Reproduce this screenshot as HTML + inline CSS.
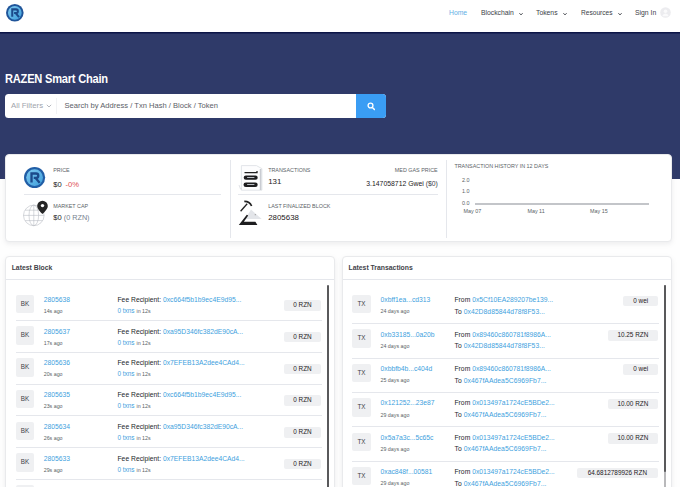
<!DOCTYPE html>
<html><head><meta charset="utf-8">
<style>
*{box-sizing:border-box;margin:0;padding:0}
html,body{width:680px;height:487px;overflow:hidden;background:#fefefe;font-family:"Liberation Sans",sans-serif;color:#1e2022}
a{color:#419fde;text-decoration:none}
#hdr{position:absolute;left:0;top:0;width:680px;height:32px;background:#fff}
#logo{position:absolute;left:6.200px;top:4px}
.nav{position:absolute;top:9.100px;font-size:6.8px;color:#3c4047;white-space:nowrap}
#band{position:absolute;left:0;top:32px;width:680px;height:147px;background:#2f3a69;border-top:1px solid #0c1546;box-shadow:inset 0 1px 0 #1c2658}
#title{position:absolute;left:5px;top:73.100px;transform:scaleY(1.08);transform-origin:0 50%;font-size:11.1px;font-weight:bold;color:#fff;letter-spacing:-0.22px}
#search{position:absolute;left:5px;top:94px;width:381px;height:24px;background:#fff;border-radius:3.500px;overflow:hidden}
#search .f{position:absolute;left:6px;top:7px;font-size:7.8px;color:#a0a4ab}
#search .p{position:absolute;left:59.500px;top:7px;font-size:7.58px;color:#5b6067}
#search .b{position:absolute;right:0;top:0;width:30px;height:24px;background:#3a9df4}
.card{position:absolute;background:#fff;border:1px solid #e9eaec;border-radius:4px;box-shadow:0 2px 5px rgba(120,125,135,.13)}
#stats{left:5px;top:154px;width:667px;height:88px}
#st{position:absolute;left:0;top:0;width:680px;height:0}
.v2{font-size:7.900px!important}
.ax{font-size:5.400px!important}
.lbl{position:absolute;line-height:9px;font-size:5.400px;color:#5a5f66;letter-spacing:0;white-space:nowrap}
.val{position:absolute;line-height:10px;font-size:7.600px;color:#1e2022;white-space:nowrap}
.hr{position:absolute;height:1px;background:#e5e7ec}
.vr{position:absolute;width:1px;background:#e5e7ec}
.hd{position:absolute;line-height:10px;font-size:6.850px;font-weight:bold;color:#3f4349;white-space:nowrap}
#rows{position:absolute;left:0;top:0;width:680px;height:0;font-size:6.750px}
.sq{position:absolute;width:18.500px;height:18.500px;background:#eff0f2;border-radius:2px;font-size:6.300px;color:#3c4047;text-align:center;line-height:18.500px}
.t{position:absolute;line-height:10px;white-space:nowrap}
.m{color:#25282c}
.s{font-size:5.300px;color:#5a5f66}
.in{font-size:5.300px;color:#5a5f66}
.bdg{position:absolute;height:10.700px;background:#eff0f2;border-radius:2px;font-size:6.400px;color:#1e2022;text-align:center;line-height:10.700px;white-space:nowrap}
.sb{position:absolute;width:2px;background:#59595b;border-radius:1px}
</style></head><body>
<div id="hdr">
<svg id="logo" width="17.600" height="17.600" viewBox="0 0 20 20"><defs><linearGradient id="lg0" x1="0" y1="0" x2="1" y2="1"><stop offset="0" stop-color="#7fcaf0"/><stop offset="1" stop-color="#3f9fdc"/></linearGradient></defs><circle cx="10" cy="10" r="10" fill="#1f5499"/><circle cx="10" cy="10" r="7.800" fill="url(#lg0)"/><path d="M7.100 14.600V6.100h4.300a2.100 2.100 0 0 1 0 4.200H9.200M11 10.300l3.800 4.700" fill="none" stroke="#1b4a8b" stroke-width="2.300"/></svg>
<span class="nav" style="left:449px;color:#62afe5">Home</span>
<span class="nav" style="left:481px">Blockchain</span>
<span class="nav" style="left:536px">Tokens</span>
<span class="nav" style="left:581px;font-size:6.6px;top:9.300px">Resources</span>
<span class="nav" style="left:635px">Sign In</span>
<svg style="position:absolute;left:517.700px;top:10.900px" width="6" height="6" viewBox="0 0 6 6"><path d="M1.5 2.3L3 3.8 4.5 2.3" fill="none" stroke="#2c3037" stroke-width="1"/></svg>
<svg style="position:absolute;left:561.700px;top:10.900px" width="6" height="6" viewBox="0 0 6 6"><path d="M1.5 2.3L3 3.8 4.5 2.3" fill="none" stroke="#2c3037" stroke-width="1"/></svg>
<svg style="position:absolute;left:616.700px;top:10.900px" width="6" height="6" viewBox="0 0 6 6"><path d="M1.5 2.3L3 3.8 4.5 2.3" fill="none" stroke="#2c3037" stroke-width="1"/></svg>
<svg style="position:absolute;left:660px;top:7px" width="11" height="11" viewBox="0 0 11 11"><circle cx="5.5" cy="5.5" r="5.300" fill="#ececef"/><circle cx="5.5" cy="4.3" r="1.800" fill="#fafafb"/><path d="M2.200 9.200a3.400 3.400 0 0 1 6.600 0z" fill="#fafafb"/></svg>
</div>
<div id="band"></div>
<div id="title">RAZEN Smart Chain</div>
<div id="search"><span class="f">All Filters</span>
<svg style="position:absolute;left:41px;top:9px" width="6" height="6" viewBox="0 0 6 6"><path d="M.8 1.800L3 4 5.200 1.800" fill="none" stroke="#a3a7ae" stroke-width=".8"/></svg>
<div style="position:absolute;left:51px;top:4px;width:1px;height:16px;background:#f1f2f4"></div>
<span class="p">Search by Address / Txn Hash / Block / Token</span>
<div class="b"><svg style="position:absolute;left:10.500px;top:8px" width="8.800" height="8.800" viewBox="0 0 8 8"><circle cx="3.2" cy="3.2" r="2.2" fill="none" stroke="#fff" stroke-width="1.2"/><path d="M4.9 4.9L7.2 7.2" stroke="#fff" stroke-width="1.3"/></svg></div>
</div>

<div class="card" id="stats"></div>
<div id="st">
<svg style="position:absolute;left:24.400px;top:167.100px" width="21.200" height="21.200" viewBox="0 0 20 20"><defs><linearGradient id="lg" x1="0" y1="0" x2="1" y2="1"><stop offset="0" stop-color="#7fcaf0"/><stop offset="1" stop-color="#3f9fdc"/></linearGradient></defs><circle cx="10" cy="10" r="10" fill="#215ea6"/><circle cx="10" cy="10" r="7.900" fill="url(#lg)"/><path d="M7.100 14.600V6.100h4.300a2.100 2.100 0 0 1 0 4.200H9.200M11 10.300l3.800 4.700" fill="none" stroke="#1b4a8b" stroke-width="2.200"/></svg>
<span class="lbl" style="left:53.200px;top:166px">PRICE</span>
<span class="val" style="left:53.200px;top:179.500px">$0 <span style="color:#de4d52;margin-left:1.700px">-0%</span></span>
<div class="hr" style="left:24px;top:194px;width:197px"></div>
<svg style="position:absolute;left:22.500px;top:199.500px" width="26" height="27" viewBox="0 0 26 27"><g fill="none" stroke="#b4b8be" stroke-width=".55"><circle cx="10.800" cy="15.400" r="10.300"/><ellipse cx="10.800" cy="15.400" rx="4.800" ry="10.300"/><path d="M.5 15.400h20.600M10.800 5.100v20.600M2.200 10.200h17.200M2.200 20.600h17.200"/></g><path d="M19.500 .7a5.300 5.300 0 0 0-5.300 5.300c0 3.600 5.300 8 5.300 8s5.300-4.400 5.300-8a5.300 5.300 0 0 0-5.300-5.300z" fill="#262626"/><circle cx="19.500" cy="5.600" r="1.700" fill="#fff"/></svg>
<span class="lbl" style="left:53.200px;top:202.200px">MARKET CAP</span>
<span class="val" style="left:53.200px;top:213px">$0 <span style="color:#77838f;font-size:7.250px">(0 RZN)</span></span>
<div class="vr" style="left:230px;top:160px;height:78px"></div>
<svg style="position:absolute;left:238px;top:164px" width="26" height="28" viewBox="0 0 26 28"><path d="M3.400 1.600h15l5.500 3v21.600H3.400z" fill="#fdfdfe" stroke="#dfe2e7" stroke-width=".9"/><path d="M22.600 5v21" stroke="#c9ccd2" stroke-width="1.600"/><path d="M6.500 8.600h12.500v-1.500" fill="none" stroke="#222" stroke-width="1.300"/><rect x="5.700" y="11.500" width="14" height="4.300" rx="2.150" fill="#1d1d1f"/><rect x="9" y="13" width="7.500" height="1.100" rx=".5" fill="#b9bdc3"/><rect x="5.500" y="18.400" width="14.200" height="4.700" rx="2.350" fill="#1d1d1f"/><rect x="9" y="20" width="7.500" height="1.100" rx=".5" fill="#b9bdc3"/><path d="M1 21l1.500 4h1.500" fill="none" stroke="#d3d6db" stroke-width=".7"/></svg>
<span class="lbl" style="left:268.200px;top:166px">TRANSACTIONS</span>
<span class="val v2" style="left:268.200px;top:177.200px">131</span>
<span class="lbl" style="right:242.300px;top:166.400px">MED GAS PRICE</span>
<span class="val" style="right:242.200px;top:178.600px;font-size:6.850px">3.147058712 Gwei <span style="color:#3c4047">($0)</span></span>
<div class="hr" style="left:238px;top:194px;width:200px"></div>
<svg style="position:absolute;left:238px;top:199px" width="26" height="28" viewBox="0 0 26 28"><path d="M2.600 12.300L9.200 4.700" stroke="#222" stroke-width="1.300"/><path d="M6.300 2.400c3.200-.1 6 1.700 7.300 4.600" fill="none" stroke="#222" stroke-width="1.700"/><path d="M13 10.500l10.700 9.500H7z" fill="#e3e5e9"/><path d="M8.800 15.800l1.400.6-4.300 6.400h11.500l2 3.300H.8z" fill="#1d1d1f"/><circle cx="17.300" cy="15.700" r=".6" fill="#999"/></svg>
<span class="lbl" style="left:268.200px;top:202px">LAST FINALIZED BLOCK</span>
<span class="val v2" style="left:268.200px;top:213.200px">2805638</span>
<div class="vr" style="left:446px;top:160px;height:78px"></div>
<span class="lbl" style="left:454.400px;top:161.900px">TRANSACTION HISTORY IN 12 DAYS</span>
<span class="lbl ax" style="left:462px;top:176.300px">2.0</span>
<span class="lbl ax" style="left:462px;top:187px">1.0</span>
<span class="lbl ax" style="left:462px;top:199px">0.0</span>
<div class="hr" style="left:475px;top:203px;width:174px;height:2px;background:#c3c5c9"></div>
<span class="lbl ax" style="left:463.500px;top:206.800px">May 07</span>
<span class="lbl ax" style="left:527.400px;top:206.800px">May 11</span>
<span class="lbl ax" style="left:590px;top:206.800px">May 15</span>
</div>

<div class="card" id="lb" style="left:5px;top:256px;width:330px;height:260px"></div>
<div class="card" id="lt" style="left:342px;top:256px;width:330px;height:260px"></div>
<div class="hd" style="left:11.700px;top:263.300px">Latest Block</div>
<div class="hd" style="left:348.500px;top:263.300px">Latest Transactions</div>
<div class="hr" style="left:6px;width:328px;top:279px"></div>
<div class="hr" style="left:343px;width:328px;top:279px"></div>
<div class="sb" style="left:327px;top:285px;height:210px"></div>
<div class="sb" style="left:664.200px;top:285px;height:210px;background:#b9b9bb"></div>
<div class="sb" style="left:664.200px;top:285px;height:187.400px"></div>
<div id="rows">
<div class="sq" style="left:15.700px;top:294.5px">BK</div><a class="t a" style="left:43.700px;top:294.9px">2805638</a><span class="t s" style="left:43.700px;top:305.9px">14s ago</span><span class="t m" style="left:117.500px;top:294.9px">Fee Recipient: <a>0xc664f5b1b9ec4E9d95...</a></span><span class="t m" style="left:117.500px;top:305.8px"><a style="font-size:6.400px">0 txns</a> <span class="in">in 12s</span></span><div class="bdg" style="left:283.700px;width:37.500px;top:300px">0 RZN</div><div class="hr" style="left:15.700px;width:306px;top:320px"></div>
<div class="sq" style="left:15.700px;top:326.2px">BK</div><a class="t a" style="left:43.700px;top:326.6px">2805637</a><span class="t s" style="left:43.700px;top:337.6px">17s ago</span><span class="t m" style="left:117.500px;top:326.6px">Fee Recipient: <a>0xa95D346fc382dE90cA...</a></span><span class="t m" style="left:117.500px;top:337.6px"><a style="font-size:6.400px">0 txns</a> <span class="in">in 12s</span></span><div class="bdg" style="left:283.700px;width:37.500px;top:331.8px">0 RZN</div><div class="hr" style="left:15.700px;width:306px;top:352px"></div>
<div class="sq" style="left:15.700px;top:358px">BK</div><a class="t a" style="left:43.700px;top:358.4px">2805636</a><span class="t s" style="left:43.700px;top:369.4px">20s ago</span><span class="t m" style="left:117.500px;top:358.4px">Fee Recipient: <a>0x7EFEB13A2dee4CAd4...</a></span><span class="t m" style="left:117.500px;top:369.3px"><a style="font-size:6.400px">0 txns</a> <span class="in">in 12s</span></span><div class="bdg" style="left:283.700px;width:37.500px;top:363.5px">0 RZN</div><div class="hr" style="left:15.700px;width:306px;top:384px"></div>
<div class="sq" style="left:15.700px;top:389.8px">BK</div><a class="t a" style="left:43.700px;top:390.1px">2805635</a><span class="t s" style="left:43.700px;top:401.1px">23s ago</span><span class="t m" style="left:117.500px;top:390.1px">Fee Recipient: <a>0xc664f5b1b9ec4E9d95...</a></span><span class="t m" style="left:117.500px;top:401.1px"><a style="font-size:6.400px">0 txns</a> <span class="in">in 12s</span></span><div class="bdg" style="left:283.700px;width:37.500px;top:395.2px">0 RZN</div><div class="hr" style="left:15.700px;width:306px;top:415px"></div>
<div class="sq" style="left:15.700px;top:421.5px">BK</div><a class="t a" style="left:43.700px;top:421.9px">2805634</a><span class="t s" style="left:43.700px;top:432.9px">26s ago</span><span class="t m" style="left:117.500px;top:421.9px">Fee Recipient: <a>0xa95D346fc382dE90cA...</a></span><span class="t m" style="left:117.500px;top:432.8px"><a style="font-size:6.400px">0 txns</a> <span class="in">in 12s</span></span><div class="bdg" style="left:283.700px;width:37.500px;top:427px">0 RZN</div><div class="hr" style="left:15.700px;width:306px;top:447px"></div>
<div class="sq" style="left:15.700px;top:453.2px">BK</div><a class="t a" style="left:43.700px;top:453.6px">2805633</a><span class="t s" style="left:43.700px;top:464.6px">29s ago</span><span class="t m" style="left:117.500px;top:453.6px">Fee Recipient: <a>0x7EFEB13A2dee4CAd4...</a></span><span class="t m" style="left:117.500px;top:464.6px"><a style="font-size:6.400px">0 txns</a> <span class="in">in 12s</span></span><div class="bdg" style="left:283.700px;width:37.500px;top:458.8px">0 RZN</div><div class="hr" style="left:15.700px;width:306px;top:479px"></div>
<div class="sq" style="left:15.700px;top:485px">BK</div><a class="t a" style="left:43.700px;top:485.4px">2805632</a><span class="t s" style="left:43.700px;top:496.4px">32s ago</span><span class="t m" style="left:117.500px;top:485.4px">Fee Recipient: <a>0xc664f5b1b9ec4E9d95...</a></span><span class="t m" style="left:117.500px;top:496.3px"><a style="font-size:6.400px">0 txns</a> <span class="in">in 12s</span></span><div class="bdg" style="left:283.700px;width:37.500px;top:490.5px">0 RZN</div><div class="hr" style="left:15.700px;width:306px;top:511px"></div>

<div class="sq" style="left:352.200px;top:294.9px">TX</div><a class="t a" style="left:380.500px;top:295.2px">0xbff1ea...cd313</a><span class="t s" style="left:380.500px;top:306.3px">24 days ago</span><span class="t m" style="left:454.500px;top:295.2px">From <a>0x5Cf10EA289207be139...</a></span><span class="t m" style="left:454.500px;letter-spacing:.06px;top:306.7px">To <a>0x42D8d85844d78f8F53...</a></span><div class="bdg" style="left:623.2px;width:35px;top:295.5px">0 wei</div><div class="hr" style="left:352.200px;width:306.500px;top:323px"></div>
<div class="sq" style="left:352.200px;top:329.3px">TX</div><a class="t a" style="left:380.500px;top:329.6px">0xb33185...0a20b</a><span class="t s" style="left:380.500px;top:340.7px">24 days ago</span><span class="t m" style="left:454.500px;top:329.6px">From <a>0x89460c860781f8986A...</a></span><span class="t m" style="left:454.500px;letter-spacing:.06px;top:341.1px">To <a>0x42D8d85844d78f8F53...</a></span><div class="bdg" style="left:607.5px;width:50.7px;top:329.9px">10.25 RZN</div><div class="hr" style="left:352.200px;width:306.500px;top:358px"></div>
<div class="sq" style="left:352.200px;top:363.7px">TX</div><a class="t a" style="left:380.500px;top:364px">0xbbfb4b...c404d</a><span class="t s" style="left:380.500px;top:375.1px">25 days ago</span><span class="t m" style="left:454.500px;top:364px">From <a>0x89460c860781f8986A...</a></span><span class="t m" style="left:454.500px;letter-spacing:.06px;top:375.5px">To <a>0x467fAAdea5C6969Fb7...</a></span><div class="bdg" style="left:623.2px;width:35px;top:364.3px">0 wei</div><div class="hr" style="left:352.200px;width:306.500px;top:392px"></div>
<div class="sq" style="left:352.200px;top:398.1px">TX</div><a class="t a" style="left:380.500px;top:398.4px">0x121252...23e87</a><span class="t s" style="left:380.500px;top:409.5px">29 days ago</span><span class="t m" style="left:454.500px;top:398.4px">From <a>0x013497a1724cE5BDe2...</a></span><span class="t m" style="left:454.500px;letter-spacing:.06px;top:409.9px">To <a>0x467fAAdea5C6969Fb7...</a></span><div class="bdg" style="left:607.5px;width:50.7px;top:398.7px">10.00 RZN</div><div class="hr" style="left:352.200px;width:306.500px;top:426px"></div>
<div class="sq" style="left:352.200px;top:432.5px">TX</div><a class="t a" style="left:380.500px;top:432.8px">0x5a7a3c...5c65c</a><span class="t s" style="left:380.500px;top:443.9px">29 days ago</span><span class="t m" style="left:454.500px;top:432.8px">From <a>0x013497a1724cE5BDe2...</a></span><span class="t m" style="left:454.500px;letter-spacing:.06px;top:444.3px">To <a>0x467fAAdea5C6969Fb7...</a></span><div class="bdg" style="left:607.5px;width:50.7px;top:433.1px">10.00 RZN</div><div class="hr" style="left:352.200px;width:306.500px;top:461px"></div>
<div class="sq" style="left:352.200px;top:466.9px">TX</div><a class="t a" style="left:380.500px;top:467.2px">0xac848f...00581</a><span class="t s" style="left:380.500px;top:478.3px">29 days ago</span><span class="t m" style="left:454.500px;top:467.2px">From <a>0x013497a1724cE5BDe2...</a></span><span class="t m" style="left:454.500px;letter-spacing:.06px;top:478.7px">To <a>0x467fAAdea5C6969Fb7...</a></span><div class="bdg" style="left:576.5px;width:81.7px;top:467.5px">64.6812789926 RZN</div><div class="hr" style="left:352.200px;width:306.500px;top:495px"></div>

</div>
</body></html>
